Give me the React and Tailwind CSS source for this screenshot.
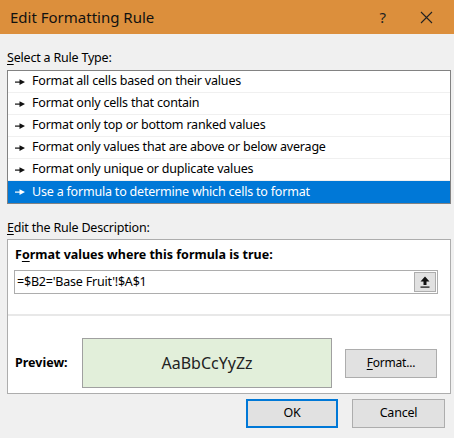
const rules = [
  "Format all cells based on their values",
  "Format only cells that contain",
  "Format only top or bottom ranked values",
  "Format only values that are above or below average",
  "Format only unique or duplicate values",
  "Use a formula to determine which cells to format",
];

const RuleArrow = ({ color }) => (
  <svg width="11" height="8" viewBox="0 0 11 8" className="shrink-0">
    <rect x="0" y="3.5" width="6" height="1.2" fill={color} />
    <path d="M4.5 1.2 L10 4.1 L4.5 6.9 Z" fill={color} />
  </svg>
);

const App = () => {
  const selected = 5;

  return (
    <div
      className="flex h-[438px] w-[454px] flex-col overflow-hidden bg-[#f0f0f0] text-[12.5px] tracking-[-0.2px] text-black"
      style={{ fontFamily: '"Segoe UI", "Noto Sans", sans-serif' }}
    >
      {/* title bar */}
      <div className="flex h-[34px] shrink-0 items-center bg-[#dc8f3c] pl-[10px] tracking-normal">
        <span className="text-[15px] text-[#111]">Edit Formatting Rule</span>
        <span className="ml-auto mr-[34px] text-[15px] text-[#222]">?</span>
        <svg width="13" height="13" viewBox="0 0 13 13" className="mr-[21px]">
          <path d="M1 1 L12 12 M12 1 L1 12" stroke="#222" strokeWidth="1.1" />
        </svg>
      </div>

      <div className="flex flex-col px-[7px]">
        <p className="mt-[14px] h-[20px] leading-[20px]">
          <span className="underline underline-offset-2">S</span>elect a Rule Type:
        </p>

        {/* rule list */}
        <div className="mt-[2px] w-[444px] border border-[#828282] bg-white">
          {rules.map((rule, index) => (
            <div
              key={rule}
              className={
                index === selected
                  ? "flex h-[22px] items-center gap-[6px] bg-[#0078d7] pl-[7px] text-white"
                  : "flex h-[22px] items-center gap-[6px] border-b border-[#f0f0f0] pl-[7px]"
              }
            >
              <RuleArrow color={index === selected ? "#ffffff" : "#111111"} />
              <span>{rule}</span>
            </div>
          ))}
        </div>

        <p className="mt-[14px] h-[20px] leading-[20px]">
          <span className="underline underline-offset-2">E</span>dit the Rule Description:
        </p>

        {/* description box */}
        <div className="mt-px flex h-[155px] w-[444px] flex-col border border-[#adadad] bg-white">
          <p className="mt-[5px] h-[20px] pl-[7px] font-bold leading-[20px] tracking-normal">
            F<span className="underline underline-offset-2">o</span>rmat values where this formula is true:
          </p>
          <div className="ml-[6px] mt-[5px] flex h-[24px] w-[424px] items-center border border-[#adadad] bg-white">
            <span className="pl-[2px]">=$B2='Base Fruit'!$A$1</span>
            <button className="ml-auto mr-px flex h-[20px] w-[22px] items-center justify-center border border-[#adadad] bg-[#e1e1e1]">
              <svg width="10" height="12" viewBox="0 0 10 12">
                <path d="M5 0.5 L9.5 5.5 L6.5 5.5 L6.5 9 L3.5 9 L3.5 5.5 L0.5 5.5 Z" fill="#111" />
                <rect x="0.5" y="10.5" width="9" height="1.2" fill="#111" />
              </svg>
            </button>
          </div>

          <div className="mt-[20px] h-[2px] w-full bg-[#e8e8e8]" />

          <div className="mt-[22px] flex items-center">
            <span className="w-[74px] pl-[7px] font-bold tracking-normal">Preview:</span>
            <div className="flex h-[50px] w-[250px] items-center justify-center border border-[#a0a0a0] bg-[#e2efda] text-[16px] tracking-normal text-[#222]">
              AaBbCcYyZz
            </div>
            <button className="ml-[13px] h-[29px] w-[92px] border border-[#adadad] bg-[#e1e1e1] text-[12px]">
              <span className="underline underline-offset-2">F</span>ormat...
            </button>
          </div>
        </div>

        {/* dialog buttons */}
        <div className="mt-[5px] flex justify-end gap-[14px] pr-[2px]">
          <button className="h-[29px] w-[92px] border-2 border-[#0078d7] bg-[#e1e1e1]">OK</button>
          <button className="h-[29px] w-[93px] border border-[#adadad] bg-[#e1e1e1]">Cancel</button>
        </div>
      </div>
    </div>
  );
};

export default App;
